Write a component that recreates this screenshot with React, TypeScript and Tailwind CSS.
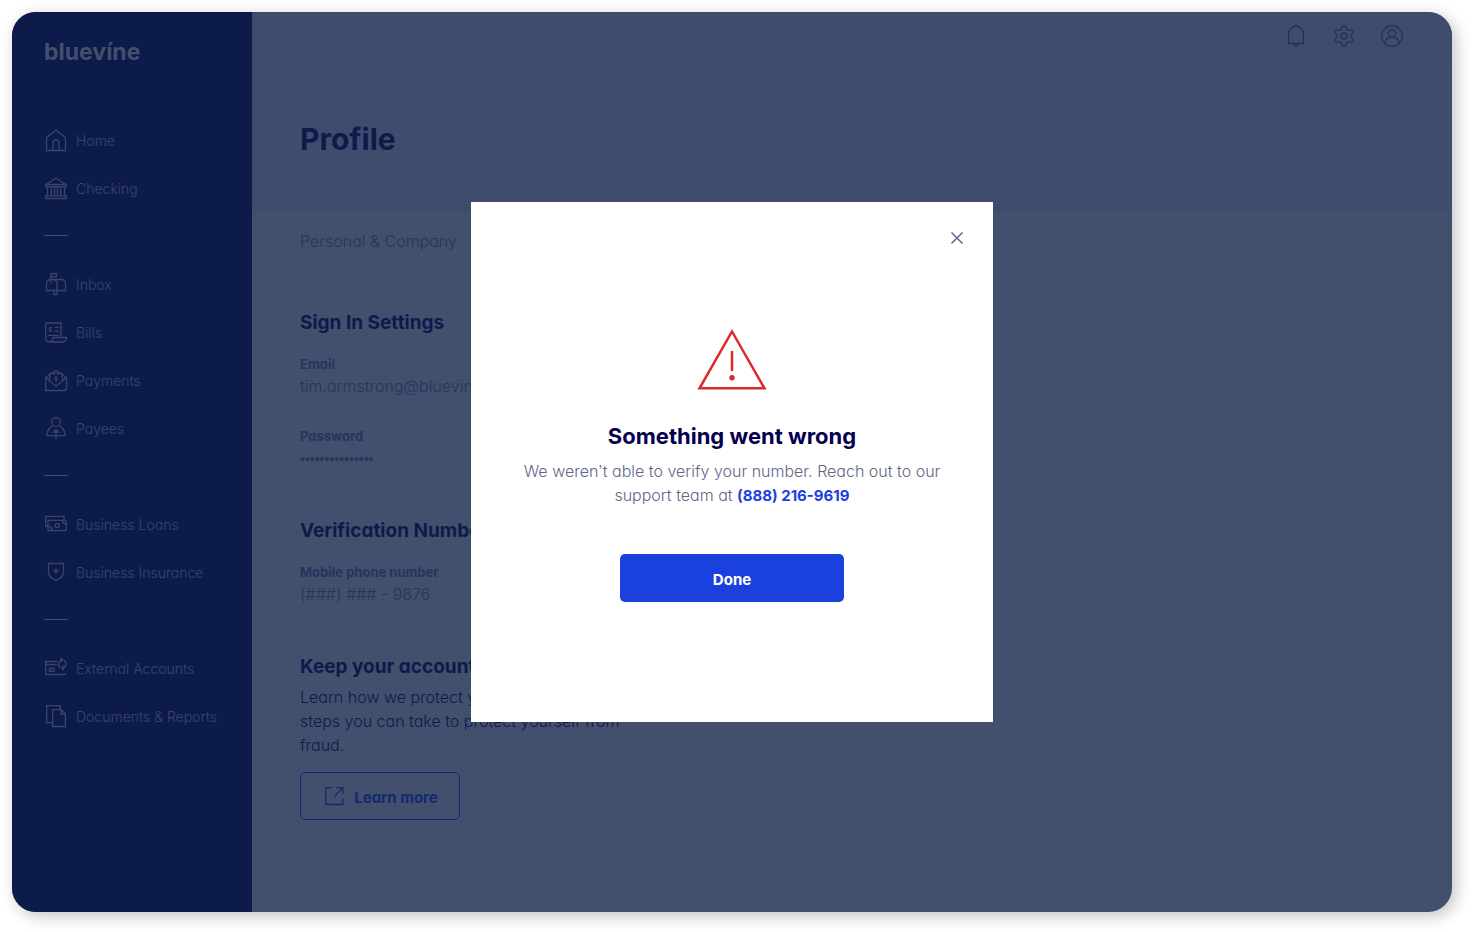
import React from 'react';
import { Settings } from 'lucide-react';

type IconProps = { children: React.ReactNode; className?: string };

function Icon({ children, className = '' }: IconProps) {
  return (
    <svg
      viewBox="0 0 24 24"
      className={`h-6 w-6 shrink-0 ${className}`}
      fill="none"
      stroke="currentColor"
      strokeWidth="1.3"
      aria-hidden="true"
    >
      {children}
    </svg>
  );
}

const Dollar = ({ x, y }: { x: number; y: number }) => (
  <path
    transform={`translate(${x} ${y})`}
    strokeWidth="1"
    d="M1.6-1.4C1.3-2-1.5-2.3-1.5-.9-1.5.3 1.6-.3 1.6 1c0 1.4-2.900 1.200-3.200.3M0-3v6"
  />
);

const HomeIcon = () => (
  <Icon>
    <path d="M2.500 9.500 12 2.300l9.500 7.200v13h-19z" />
    <path d="M9 22.500V15a3 3 0 0 1 6 0v7.500" />
  </Icon>
);

const BankIcon = () => (
  <Icon>
    <path d="M2.500 8.300 12 2.300l9.500 6M1.700 8.500h20.600v2.200H1.700zM1.700 19.800h20.600v2.700H1.700z" />
    <path d="M3.500 10.700v9M7.300 10.700v9M10.500 10.700v9M13.500 10.700v9M16.700 10.700v9M20.500 10.700v9" />
  </Icon>
);

const MailboxIcon = () => (
  <Icon>
    <path d="M2.500 18.500v-7a4 4 0 0 1 4-4h11a4 4 0 0 1 4 4v7z" />
    <path d="M9 7.500a4 4 0 0 1 4 4v7M7 11V1.700h5.500v3H7M9.800 18.500v4H13v-4" />
  </Icon>
);

const BillsIcon = () => (
  <Icon>
    <path d="M1.700 18.500V3H17v14.500M1.700 18.500A3.500 3.500 0 0 0 5 22c3 0 3.800-1.600 4.200-4.500h13.300c0 3-1.700 4.500-4.200 4.500H5" />
    <path d="M10.300 7.300h4.500M10.300 11.200h4.500M4 15.300h11" />
    <Dollar x={6.3} y={9.3} />
  </Icon>
);

const PaymentsIcon = () => (
  <Icon>
    <path d="M1.700 9.500v13h18.300a2.500 2.500 0 0 0 2.500-2.500V9.500L12 2.200z" />
    <path d="M1.700 9.500 12 18.500l10.500-9M5.700 13V5.500h12.600V13" />
    <Dollar x={12} y={10.8} />
  </Icon>
);

const PayeesIcon = () => (
  <Icon>
    <circle cx="12" cy="6" r="4.300" />
    <path d="M8.500 10.200C5 12 3 15 2.800 19.600h18.400C21 15 19 12 15.500 10.200M12 23v-9M9.700 16 12 13.700l2.300 2.300z" />
  </Icon>
);

const LoansIcon = () => (
  <Icon>
    <path d="M4 14.400H1.700v-10H20v4M4 8.400h16a2.400 2.400 0 0 1 2.400 2.400V16a2.600 2.600 0 0 1-2.600 2.600H4zM4 14.400a4 4 0 0 1 4.200 4.200M18.500 8.400a4 4 0 0 0 3.900 4" />
    <circle cx="13.300" cy="13.500" r="2.100" />
  </Icon>
);

const ShieldIcon = () => (
  <Icon>
    <path d="M4.500 3.500h15v8c0 4.300-3.200 7.300-7.500 8.900-4.300-1.600-7.500-4.600-7.500-8.900zM12 8.200v5.600M9.200 11h5.600" />
  </Icon>
);

const ExternalIcon = () => (
  <Icon>
    <path d="M13.300 5.500H1.700v13h18.200c1 0 1.700-.600 1.700-1.600M1.700 8.500h11.500M5.500 12.300h4.400v3H5.500z" />
    <path d="M16.300 11.800c-2.700-2.400-2.300-7.200 2.200-8M20.300 4.200c2.700 2.400 2.200 7.200-2.200 7.900M16.600 1.600l2.200 2.100-1.900 2.300M20 14.300l-2.200-2.100 1.900-2.300" />
  </Icon>
);

const DocumentsIcon = () => (
  <Icon>
    <path d="M8.500 18.600H2.700V1.700h13.200v4M8.700 5.700H17l4.400 4.400v12.400H8.700zM17 5.700v4.400h4.400" />
  </Icon>
);

const BellIcon = () => (
  <Icon>
    <path d="M4.500 19.500v-9.700a7.500 7.500 0 0 1 15 0v9.700zM9.800 2.700c.3-1.600 4.100-1.600 4.400 0M9.800 19.500c0 3.600 4.400 3.600 4.400 0" />
  </Icon>
);

const UserIcon = () => (
  <Icon>
    <circle cx="12" cy="12" r="10.400" />
    <circle cx="12" cy="9.600" r="3.800" />
    <path d="M4.800 19.300c.6-3.600 3.600-5.900 7.200-5.900s6.600 2.300 7.200 5.900" />
  </Icon>
);

const groups = [
  [
    { label: 'Home', icon: HomeIcon },
    { label: 'Checking', icon: BankIcon },
  ],
  [
    { label: 'Inbox', icon: MailboxIcon },
    { label: 'Bills', icon: BillsIcon },
    { label: 'Payments', icon: PaymentsIcon },
    { label: 'Payees', icon: PayeesIcon },
  ],
  [
    { label: 'Business Loans', icon: LoansIcon },
    { label: 'Business Insurance', icon: ShieldIcon },
  ],
  [
    { label: 'External Accounts', icon: ExternalIcon },
    { label: 'Documents & Reports', icon: DocumentsIcon },
  ],
];

function Sidebar() {
  return (
    <aside className="w-60 shrink-0 bg-[#0d1b4a] px-8 pt-6 text-[#3a4669]">
      <a href="#" className="block h-20 text-[23px] leading-8 font-bold text-[#424f6d]">
        bluevíne
      </a>
      <nav>
        {groups.map((items, i) => (
          <React.Fragment key={i}>
            {i > 0 && (
              <div className="flex h-12 items-center pb-0.5">
                <hr className="w-6 border-[#424f6d]" />
              </div>
            )}
            <ul>
              {items.map(({ label, icon: ItemIcon }) => (
                <li key={label}>
                  <a href="#" className="flex h-12 items-center gap-2 text-sm font-light whitespace-nowrap">
                    <ItemIcon />
                    <span className="pt-0.5">{label}</span>
                  </a>
                </li>
              ))}
            </ul>
          </React.Fragment>
        ))}
      </nav>
    </aside>
  );
}

function Field({ label, children }: { label: string; children: React.ReactNode }) {
  return (
    <div className="border-b border-[#3d4969] pb-[5px] text-[#27355b]">
      <dt className="text-[13px] leading-5 font-bold">{label}</dt>
      <dd className="text-base leading-6 font-light">{children}</dd>
    </div>
  );
}

function Section({ title, children }: { title: string; children: React.ReactNode }) {
  return (
    <section className="mt-[41px] w-80">
      <h2 className="text-[19px] leading-7 font-bold whitespace-nowrap text-[#0d1b4a]">{title}</h2>
      {children}
    </section>
  );
}

function Dialog() {
  return (
    <div
      role="dialog"
      aria-modal="true"
      aria-labelledby="dialog-title"
      className="relative flex h-[520px] w-[522px] flex-col items-center bg-white px-12 pt-[124px]"
    >
      <button type="button" aria-label="Close" className="absolute top-6 right-6 text-[#5f6786]">
        <Icon>
          <path strokeWidth="1.500" d="m6.500 6.500 11 11m0-11-11 11" />
        </Icon>
      </button>
      <svg viewBox="0 0 72 72" className="h-[72px] w-[72px]" fill="none" stroke="#dc2a2a" strokeWidth="2.500" aria-hidden="true">
        <path d="M36 5.500 68.500 62.300h-65z" />
        <path d="M36 25v20" />
        <circle cx="36" cy="51.700" r="2.700" fill="#dc2a2a" stroke="none" />
      </svg>
      <h2 id="dialog-title" className="mt-[22px] text-[22px] leading-8 font-bold text-[#05004e]">
        Something went wrong
      </h2>
      <p className="mt-[7px] text-center text-base leading-6 font-light whitespace-nowrap text-[#5f6786]">
        We weren’t able to verify your number. Reach out to our
        <br />
        support team at{' '}
        <a href="tel:8882169619" className="text-[15px] font-bold text-[#1a41de]">
          (888) 216-9619
        </a>
      </p>
      <button type="button" className="mt-[46px] h-12 w-56 rounded-[5px] bg-[#1a41de] pt-1 text-[15px] font-bold text-white">
        Done
      </button>
    </div>
  );
}

export default function App() {
  return (
    <div className="min-h-screen bg-white pt-3 pr-5 pb-5 pl-3 font-['Inter',sans-serif] [font-feature-settings:'cv11','ss03']">
      <div className="relative flex min-h-[calc(100vh-32px)] overflow-hidden rounded-3xl bg-[#424f6d] shadow-[4px_4px_16px_rgba(0,0,0,0.24)]">
        <Sidebar />
        <main className="min-w-0 flex-1">
          <div className="bg-[#404c6e]">
            <header className="flex h-12 items-center justify-end gap-6 border-b border-[#3d496b] px-12 text-[#22305b]">
              <button type="button" aria-label="Notifications">
                <BellIcon />
              </button>
              <button type="button" aria-label="Settings">
                <Settings size={24} strokeWidth={1.3} />
              </button>
              <button type="button" aria-label="Account">
                <UserIcon />
              </button>
            </header>
            <div className="h-38 px-12 pt-[59px]">
              <h1 className="text-3xl leading-10 font-bold text-[#0d1b4a]">Profile</h1>
            </div>
          </div>
          <div className="px-12 pb-10">
            <nav className="flex h-14 items-center border-b border-[#3d4969] pb-px">
              <a href="#" className="pt-1 text-base leading-6 font-light text-[#27355b]">
                Personal &amp; Company
              </a>
            </nav>
            <Section title="Sign In Settings">
              <dl className="mt-[17px] flex flex-col gap-[22px]">
                <Field label="Email">tim.armstrong@bluevine.com</Field>
                <Field label="Password">
                  <span className="block pt-0.5 font-['Liberation_Sans',sans-serif] text-sm leading-[22px]">•••••••••••••••</span>
                </Field>
              </dl>
            </Section>
            <Section title="Verification Number">
              <dl className="mt-[17px]">
                <Field label="Mobile phone number">(###) ### - 9876</Field>
              </dl>
            </Section>
            <Section title="Keep your account secure">
              <p className="mt-1 text-base leading-6 font-light whitespace-nowrap text-[#0d1b4a]">
                Learn how we protect you and
                <br />
                steps you can take to protect yourself from
                <br />
                fraud.
              </p>
              <a
                href="#"
                className="mt-[15px] flex h-12 w-40 items-center justify-center gap-2 rounded-[5px] border border-[#132a78] text-[15px] font-bold whitespace-nowrap text-[#132a72]"
              >
                <Icon>
                  <path d="M10.500 3.700H3.700v16.800h17.200v-6M12.500 12.500l8.200-8.600M14 3.700h6.900v6.500" />
                </Icon>
                <span className="pt-1">Learn more</span>
              </a>
            </Section>
          </div>
        </main>
        <div className="absolute inset-0 flex items-center justify-center">
          <Dialog />
        </div>
      </div>
    </div>
  );
}
